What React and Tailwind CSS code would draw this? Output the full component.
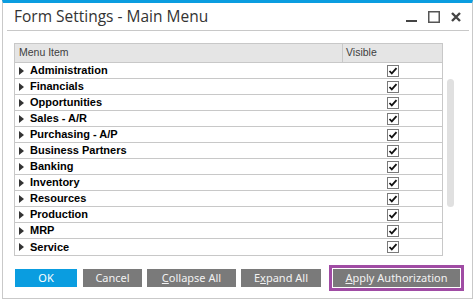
import React from "react";

const items = [
  "Administration",
  "Financials",
  "Opportunities",
  "Sales - A/R",
  "Purchasing - A/P",
  "Business Partners",
  "Banking",
  "Inventory",
  "Resources",
  "Production",
  "MRP",
  "Service",
];

function CheckBox() {
  return (
    <div className="w-[12px] h-[12px] border border-[#7a7a7a] bg-white flex items-center justify-center">
      <svg width="10" height="10" viewBox="0 0 10 10">
        <path d="M1.5 5 L3.8 7.4 L8.5 2.2" fill="none" stroke="#111" strokeWidth="1.8" />
      </svg>
    </div>
  );
}

function Row({ label }) {
  return (
    <div className="flex h-[16px] border-b border-[#c8c8c8] last:border-b-0 items-center">
      <div className="w-[328px] flex items-center">
        <svg width="5" height="8" viewBox="0 0 5 8" className="ml-[4px]">
          <path d="M0 0 L5 4 L0 8 Z" fill="#333" />
        </svg>
        <span className="ml-[6px] text-[11px] font-bold text-black leading-none">
          {label}
        </span>
      </div>
      <div className="flex-1 flex justify-center">
        <CheckBox />
      </div>
    </div>
  );
}

function Btn({ children, className }) {
  return (
    <div
      className={
        "h-[18px] flex items-center justify-center text-[11px] text-[#f2f2f2] " +
        className
      }
      style={{ fontFamily: "'Noto Sans', sans-serif" }}
    >
      {children}
    </div>
  );
}

export default function App() {
  return (
    <div className="w-[475px] h-[301px] bg-white overflow-hidden">
      <div className="ml-[2px] w-[471px] h-[299px] border-x border-b border-[#c9c9c9] border-t-[3px] border-t-[#0a9de0] flex flex-col">
        {/* title */}
        <div className="ml-[4px] mr-[3px] h-[28px] border-b border-[#c8c8c8] flex items-center">
          <span
            className="ml-[7px] text-[15.5px] text-[#333] leading-none"
            style={{ fontFamily: "'Open Sans', sans-serif" }}
          >
            Form Settings - Main Menu
          </span>
          <div className="ml-auto mr-[8px] flex items-center">
            <svg width="12" height="12" viewBox="0 0 12 12">
              <rect x="0" y="9" width="11" height="2" fill="#444" />
            </svg>
            <svg width="12" height="12" viewBox="0 0 12 12" className="ml-[10px]">
              <rect x="0.75" y="0.75" width="10.5" height="10.5" fill="none" stroke="#555" strokeWidth="1.5" />
            </svg>
            <svg width="10" height="10" viewBox="0 0 10 10" className="ml-[11px]">
              <path d="M1 1 L9 9 M9 1 L1 9" stroke="#444" strokeWidth="2.4" />
            </svg>
          </div>
        </div>

        {/* grid */}
        <div className="flex mt-[12px] ml-[11px]">
          <div
            className="w-[429px] border border-[#c8c8c8]"
            style={{ fontFamily: "'Liberation Sans', Arial, sans-serif" }}
          >
            <div className="flex h-[19px] bg-[#e5e5e5] border-b border-[#c8c8c8] text-[10.5px] text-[#404040]">
              <div className="w-[328px] border-r border-[#c8c8c8] flex items-center pl-[4px]">
                Menu Item
              </div>
              <div className="flex-1 flex items-center pl-[3px]">Visible</div>
            </div>
            {items.map((it) => (
              <Row key={it} label={it} />
            ))}
          </div>
          <div className="ml-[4px] mt-[36px] w-[7px] h-[128px] rounded-full bg-[#e0e0e0]" />
        </div>

        {/* buttons */}
        <div className="flex items-center mt-[9px] h-[26px]">
          <Btn className="ml-[12px] w-[62px] bg-[#0a9de0] text-white">OK</Btn>
          <Btn className="ml-[6px] w-[59px] bg-[#7a7a7a]">Cancel</Btn>
          <Btn className="ml-[5px] w-[89px] bg-[#7a7a7a]">
            <span className="underline underline-offset-1">C</span>ollapse All
          </Btn>
          <Btn className="ml-[5px] w-[80px] bg-[#7a7a7a]">
            E<span className="underline underline-offset-1">x</span>pand All
          </Btn>
          <div className="ml-[8px] w-[135px] h-[26px] border-[3px] border-[#a04ca4] p-[1px]">
            <Btn className="w-full bg-[#7a7a7a]">
              <span className="underline underline-offset-1">A</span>pply Authorization
            </Btn>
          </div>
        </div>
      </div>
    </div>
  );
}
